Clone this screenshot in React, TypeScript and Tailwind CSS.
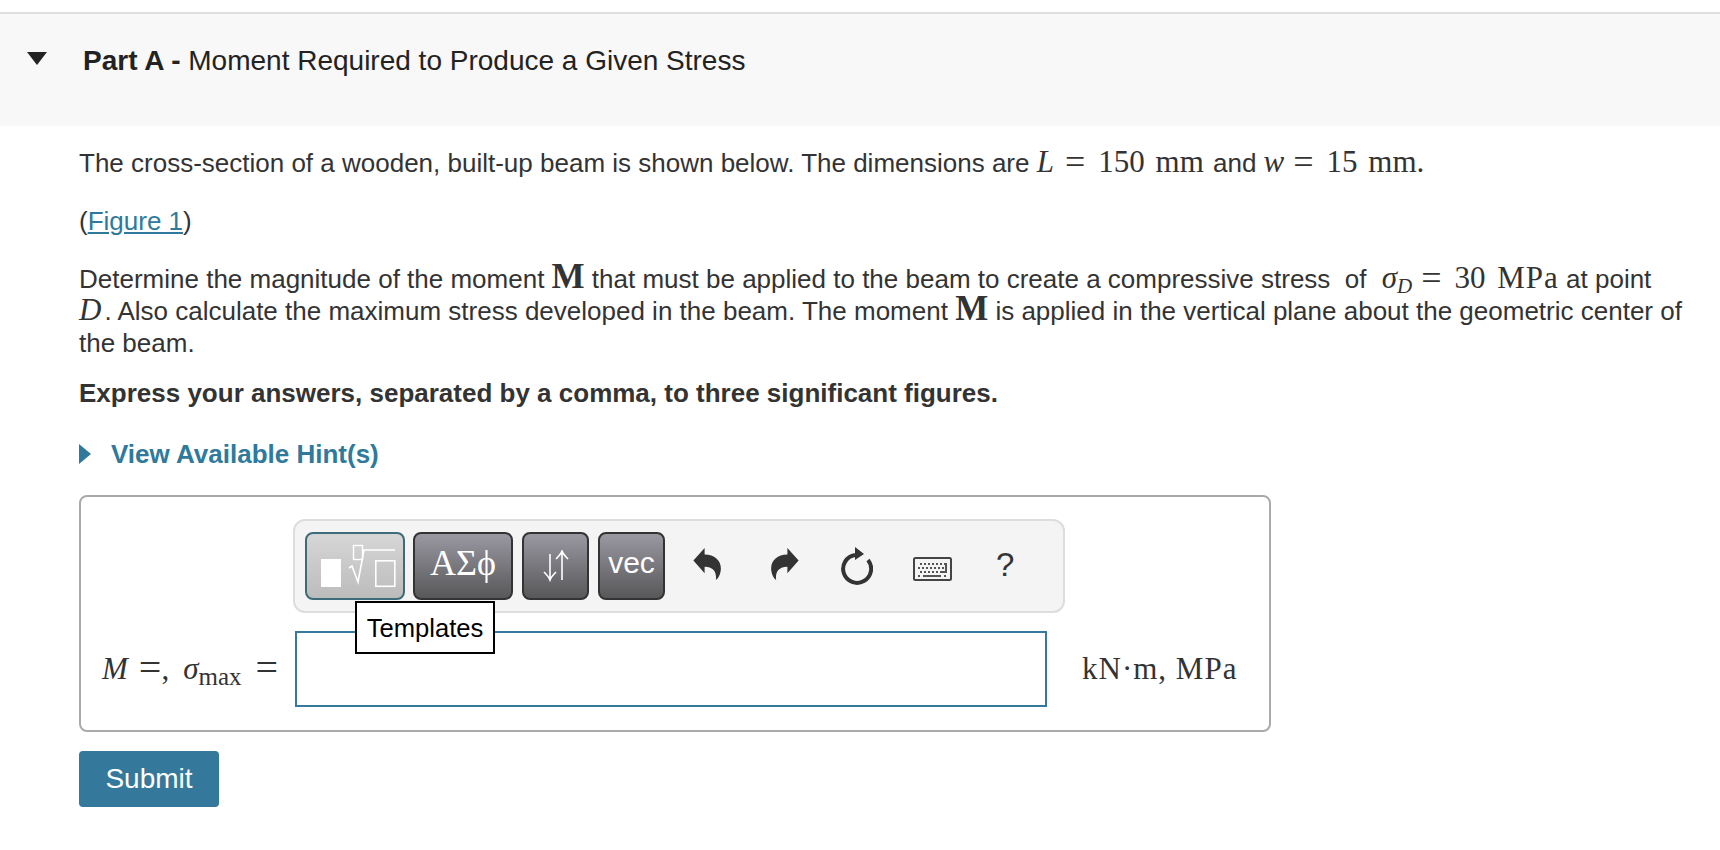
import React from 'react';

const mathFont = "font-['Liberation_Serif',serif]";

// Small pieces of typeset math, line height 0 so they never push the text lines apart
const MI = ({ children }: { children: React.ReactNode }) => (
  <span className={`${mathFont} italic text-[31px] leading-[0]`}>{children}</span>
);
const MR = ({ children }: { children: React.ReactNode }) => (
  <span className={`${mathFont} text-[31px] leading-[0]`}>{children}</span>
);
const MB = ({ children }: { children: React.ReactNode }) => (
  <span className={`${mathFont} font-bold text-[35px] leading-[0]`}>{children}</span>
);
const Eq = () => (
  <span className={`${mathFont} ml-[9px] mr-[13px] text-[36px] leading-[0] align-[-2px]`}>=</span>
);

const TemplatesIcon = () => (
  <svg width="76" height="46" viewBox="0 0 76 46" fill="none">
    <rect x="0" y="16" width="20" height="28" fill="#fff" />
    <rect x="32.5" y="2.5" width="9" height="14" stroke="#fff" strokeWidth="1.4" />
    <path d="M28 25 L31 23 L37 39 L43 7 H74" stroke="#fff" strokeWidth="1.6" />
    <rect x="54.8" y="17.8" width="19" height="25.5" stroke="#fff" strokeWidth="1.6" />
  </svg>
);

const ArrowsIcon = () => (
  <svg width="26" height="32" viewBox="0 0 26 32" fill="none" stroke="#fff" strokeWidth="1.6">
    <path d="M7 4 V30 M1 22 C4 25 6 27 7 30 C8 27 10 25 13 22" />
    <path d="M19 30 V1 M13 9 C16 6 18 4 19 1 C20 4 22 6 25 9" />
  </svg>
);

const UndoIcon = () => (
  <svg width="28" height="32" viewBox="0 0 80 94" fill="#333">
    <path d="M0 37 L33 0 V19 C65 19 85 40 80 68 C78 80 72 90 66 94 C68 80 66 55 33 55 V74 Z" />
  </svg>
);

const RedoIcon = () => (
  <svg width="28" height="32" viewBox="0 0 80 94" fill="#333">
    <path d="M80 37 L47 0 V19 C15 19 -5 40 0 68 C2 80 8 90 14 94 C12 80 14 55 47 55 V74 Z" />
  </svg>
);

const ResetIcon = () => (
  <svg width="34" height="38" viewBox="0 0 34 38" fill="none">
    <path d="M16 8 A14 14 0 1 0 29 13" stroke="#333" strokeWidth="4" />
    <path d="M16 0 L25 7 L16 13 Z" fill="#333" />
  </svg>
);

const KeyboardIcon = () => {
  const rows = [
    { y: 6, xs: [7, 11, 15, 19, 23, 27, 31] },
    { y: 10, xs: [5, 9, 13, 17, 21, 25, 29] },
    { y: 14, xs: [7, 11, 15, 19, 23] },
    { y: 18, xs: [5, 31] },
  ];
  return (
    <svg width="39" height="24" viewBox="0 0 39 24" fill="none">
      <rect x="1" y="1" width="37" height="22" rx="1.5" stroke="#444" strokeWidth="2" />
      {rows.map((r) =>
        r.xs.map((x) => <rect key={`${r.y}-${x}`} x={x} y={r.y} width="2" height="2" fill="#555" />)
      )}
      <rect x="10" y="18" width="18" height="2" fill="#555" />
      <path d="M33 6 V15 H27" stroke="#555" strokeWidth="2" />
    </svg>
  );
};

const darkBtn =
  'flex items-center justify-center h-[68px] rounded-[8px] border-2 border-[#333] bg-gradient-to-b from-[#9a99a2] to-[#58585a] text-white';

const App: React.FC = () => {
  return (
    <div className="w-[1720px] h-[850px] overflow-hidden bg-white pt-3 font-['Liberation_Sans',sans-serif] text-[#333] text-[26px] leading-[32px]">
      {/* Part header */}
      <div className="flex items-start h-[114px] border-t-2 border-[#dfdfdf] bg-[#f8f8f8] pt-[31px]">
        <svg className="ml-[27px] mt-[7px]" width="20" height="13" viewBox="0 0 20 13" fill="#222">
          <path d="M0 0 H20 L10 13 Z" />
        </svg>
        <h2 className="ml-[36px] text-[28px] leading-[32px] text-[#222]">
          <b>Part A -</b> Moment Required to Produce a Given Stress
        </h2>
      </div>

      <div className="pl-[79px]">
        <p className="mt-[21px] whitespace-nowrap">
          The cross-section of a wooden, built-up beam is shown below. The dimensions are <MI>L</MI><span className="ml-[2px]" /><Eq /><MR>150<span className="ml-[3px]"> mm</span></MR><span className="ml-[2px]"> and </span><MI>w</MI><Eq /><MR>15<span className="ml-[3px]"> mm.</span></MR>
        </p>
        <p className="mt-[26px]">
          (<span className="text-[#2f7a9c] underline">Figure 1</span>)
        </p>
        <p className="mt-[26px] whitespace-nowrap">
          Determine the magnitude of the moment <MB>M</MB> that must be applied to the beam to create a compressive stress &nbsp;of <span className="ml-[8px]" /><MI>σ<sub className="text-[21px]">D</sub></MI><Eq /><MR>30<span className="ml-[3px] tracking-[1px]"> MPa</span></MR> at point
          <br />
          <MI>D</MI><span className="ml-[3px]">.</span> Also calculate the maximum stress developed in the beam. The moment <MB>M</MB> is applied in the vertical plane about the geometric center of
          <br />
          the beam.
        </p>
        <p className="mt-[18px] font-bold">Express your answers, separated by a comma, to three significant figures.</p>

        <div className="mt-[29px] flex items-center">
          <svg width="12" height="20" viewBox="0 0 12 20" fill="#2f7a9c">
            <path d="M0 0 L12 10 L0 20 Z" />
          </svg>
          <span className="ml-[20px] font-bold text-[#2f7a9c]">View Available Hint(s)</span>
        </div>

        {/* Answer box */}
        <div className="mt-[25px] w-[1192px] h-[237px] rounded-[8px] border-2 border-[#aaa] pt-[22px] pl-[212px]">
          <div className="flex items-center w-[772px] h-[94px] rounded-[12px] border-2 border-[#ddd] bg-[#f4f4f4] pl-[10px]">
            <div className="flex items-center pl-[14px] w-[100px] h-[68px] rounded-[8px] border-2 border-[#3d6b7a] bg-gradient-to-b from-[#d6d6d6] to-[#bcbcbc]">
              <TemplatesIcon />
            </div>
            <div className={`${darkBtn} ml-[8px] w-[100px] pb-[6px] ${mathFont} text-[36px]`}>ΑΣϕ</div>
            <div className={`${darkBtn} ml-[9px] w-[67px]`}><ArrowsIcon /></div>
            <div className={`${darkBtn} ml-[9px] w-[67px] pb-[6px] text-[30px]`}>vec</div>
            <div className="ml-[28px] mb-[4px]"><UndoIcon /></div>
            <div className="ml-[50px] mb-[4px]"><RedoIcon /></div>
            <div className="ml-[40px]"><ResetIcon /></div>
            <div className="ml-[40px] mt-[6px]"><KeyboardIcon /></div>
            <span className="ml-[44px] mb-[4px] text-[33px] leading-none">?</span>
          </div>

          <div className="flex items-center mt-[18px] relative">
            <div className={`absolute left-[-191px] top-[22px] ${mathFont} text-[31px] whitespace-nowrap`}>
              <i>M</i><span className="ml-[11px] text-[40px] leading-[0] align-[-2px]">=</span>,<i className="ml-[14px]">σ</i><sub className="text-[25px]">max</sub><span className="ml-[14px] text-[40px] leading-[0] align-[-2px]">=</span>
            </div>
            <div className="relative w-[752px] h-[76px] border-2 border-[#337a9b] ml-[2px]">
              <div className="absolute left-[58px] top-[-32px] w-[140px] h-[53px] flex items-center justify-center border-2 border-black bg-white text-black text-[25.6px]">
                Templates
              </div>
            </div>
            <span className={`ml-[35px] ${mathFont} text-[31px] tracking-[1px] whitespace-nowrap`}>kN·m, MPa</span>
          </div>
        </div>

        <button className="mt-[19px] w-[140px] h-[56px] rounded-[4px] bg-[#34799b] text-white text-[28px]">Submit</button>
      </div>
    </div>
  );
};

export default App;
